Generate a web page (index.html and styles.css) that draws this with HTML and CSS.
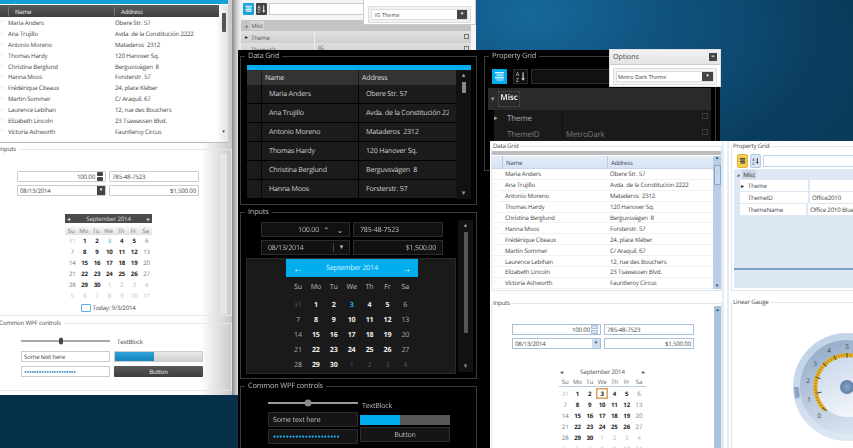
FILE: index.html
```html
<!DOCTYPE html>
<html lang="en">
<head>
<meta charset="utf-8">
<title>WPF themes</title>
<link rel="stylesheet" href="styles.css">
</head>
<body>
<svg class="defs" width="0" height="0" aria-hidden="true">
  <symbol id="cat" viewBox="0 0 15 15"><path d="M3 3h9v1.6H3zM4.5 5.6h7v1.2h-7zM3 7.8h9v1.6H3zM4.5 10.4h7v1.2h-7z" fill="currentColor"/></symbol>
  <symbol id="az" viewBox="0 0 15 15"><text x="2" y="7" font-size="6.5" font-family="Open Sans" fill="currentColor">A</text><text x="2" y="13.5" font-size="6.5" font-family="Open Sans" fill="currentColor">Z</text><path d="M9.8 2.5h1.4v7h1.6l-2.3 3-2.3-3h1.6z" fill="currentColor"/></symbol>
</svg>
<div class="desk">

<!-- IG theme window -->
<section class="win w1">
  <div class="w1-left">
    <div class="gridbox">
      <div class="w1-bar"></div>
      <div class="gridbody">
        <div class="dg dg-ig">
          <div class="dg-head"><span></span><span class="hc">Name</span><span class="hc">Address</span></div>
          <div class="dg-row"><i>▷</i><span>Maria Anders</span><span>Obere Str. 57</span></div>
          <div class="dg-row"><i>▷</i><span>Ana Trujillo</span><span>Avda. de la Constitución 2222</span></div>
          <div class="dg-row"><i>▷</i><span>Antonio Moreno</span><span>Mataderos  2312</span></div>
          <div class="dg-row"><i>▷</i><span>Thomas Hardy</span><span>120 Hanover Sq.</span></div>
          <div class="dg-row"><i>▷</i><span>Christina Berglund</span><span>Berguvsvägen  8</span></div>
          <div class="dg-row"><i>▷</i><span>Hanna Moos</span><span>Forsterstr. 57</span></div>
          <div class="dg-row"><i>▷</i><span>Frédérique Citeaux</span><span>24, place Kléber</span></div>
          <div class="dg-row"><i>▷</i><span>Martin Sommer</span><span>C/ Araquil, 67</span></div>
          <div class="dg-row"><i>▷</i><span>Laurence Lebihan</span><span>12, rue des Bouchers</span></div>
          <div class="dg-row"><i>▷</i><span>Elizabeth Lincoln</span><span>23 Tsawassen Blvd.</span></div>
          <div class="dg-row"><i>▷</i><span>Victoria Ashworth</span><span>Fauntleroy Circus</span></div>
        </div>
        <div class="sb sb-ig"><b class="sb-thumb"></b><em class="end">▾</em></div>
      </div>
    </div>

    <fieldset class="grp grp-ig grp-ig-inputs">
      <legend>Inputs</legend>
      <div class="split split-ig">
        <div>
          <div class="form form-ig">
            <div class="fld r">100.00<span class="spin"><b></b><b></b></span></div>
            <div class="fld">785-48-7523</div>
            <div class="fld">08/13/2014<span class="drop">▾</span></div>
            <div class="fld r">$1,500.00</div>
          </div>
          <div class="cal cal-ig">
            <div class="cal-head"><span>◂</span><span>September 2014</span><span>▸</span></div>
            <div class="days">
              <span>Su</span><span>Mo</span><span>Tu</span><span>We</span><span>Th</span><span>Fr</span><span>Sa</span>
            </div>
            <div class="dates">
              <span class="o">31</span><b>1</b><b>2</b><b class="today">3</b><b>4</b><b>5</b><span>6</span>
              <span>7</span><b>8</b><b>9</b><b>10</b><b>11</b><b>12</b><span>13</span>
              <span>14</span><b>15</b><b>16</b><b>17</b><b>18</b><b>19</b><span>20</span>
              <span>21</span><b>22</b><b>23</b><b>24</b><b>25</b><b>26</b><span>27</span>
              <span>28</span><b>29</b><b>30</b><span class="o">1</span><span class="o">2</span><span class="o">3</span><span class="o">4</span>
              <span class="o">5</span><span class="o">6</span><span class="o">7</span><span class="o">8</span><span class="o">9</span><span class="o">10</span><span class="o">11</span>
            </div>
            <div class="today-line"><i></i>Today: 9/3/2014</div>
          </div>
        </div>
        <div class="sb-pale"></div>
      </div>
    </fieldset>

    <fieldset class="grp grp-ig grp-ig-common">
      <legend>Common WPF controls</legend>
      <div class="wpf wpf-ig">
        <div class="slider"><b></b></div>
        <div class="tb">TextBlock</div>
        <div class="fld">Some text here</div>
        <div class="prog"><b></b></div>
        <div class="fld pass">●●●●●●●●●●●●●●●●●●●●●</div>
        <div class="btn">Button</div>
      </div>
    </fieldset>
  </div>

  <div class="w1-right">
    <div class="tools tools-ig">
      <span class="ti on"><svg><use href="#cat"/></svg></span>
      <span class="ti"><svg><use href="#az"/></svg></span>
      <span class="search"></span>
    </div>
    <div class="pg-ig">
      <div class="pg-cat"><i>◢</i><span>Misc</span></div>
      <div class="pg-row"><i>▸</i><span>Theme</span><span></span><u></u></div>
      <div class="pg-row"><i></i><span>ThemeID</span><span>IG</span><u></u></div>
    </div>
  </div>

  <aside class="opts opts-ig">
    <div class="opts-sel"><div class="sel">IG Theme<span class="drop">▾</span></div></div>
  </aside>
</section>

<!-- Metro Dark window -->
<section class="win w2">
  <div class="w2-left">
    <fieldset class="grp grp-d grp-d-grid">
      <legend>Data Grid</legend>
      <div class="d-bar"></div>
      <div class="gridbody">
        <div class="dg dg-d">
          <div class="dg-head"><span></span><span class="hc">Name</span><span class="hc">Address</span></div>
          <div class="dg-row"><i></i><span>Maria Anders</span><span>Obere Str. 57</span></div>
          <div class="dg-row"><i></i><span>Ana Trujillo</span><span>Avda. de la Constitución 2222</span></div>
          <div class="dg-row"><i></i><span>Antonio Moreno</span><span>Mataderos  2312</span></div>
          <div class="dg-row"><i></i><span>Thomas Hardy</span><span>120 Hanover Sq.</span></div>
          <div class="dg-row"><i></i><span>Christina Berglund</span><span>Berguvsvägen  8</span></div>
          <div class="dg-row"><i></i><span>Hanna Moos</span><span>Forsterstr. 57</span></div>
        </div>
        <div class="sb sb-d"><em>▴</em><b class="sb-thumb"></b><em class="end">▾</em></div>
      </div>
    </fieldset>

    <fieldset class="grp grp-d grp-d-inputs">
      <legend>Inputs</legend>
      <div class="split split-d">
        <div>
          <div class="form form-d">
            <div class="fld r">100.00<span class="chev">⌃ ⌄</span></div>
            <div class="fld">785-48-7523</div>
            <div class="fld">08/13/2014<span class="drop">▾</span></div>
            <div class="fld r">$1,500.00</div>
          </div>
          <div class="cal cal-d">
            <div class="cal-head"><span>←</span><span>September 2014</span><span>→</span></div>
            <div class="days">
              <span>Su</span><span>Mo</span><span>Tu</span><span>We</span><span>Th</span><span>Fr</span><span>Sa</span>
            </div>
            <div class="dates">
              <span class="o">31</span><b>1</b><b>2</b><b class="today">3</b><b>4</b><b>5</b><span>6</span>
              <span>7</span><b>8</b><b>9</b><b>10</b><b>11</b><b>12</b><span>13</span>
              <span>14</span><b>15</b><b>16</b><b>17</b><b>18</b><b>19</b><span>20</span>
              <span>21</span><b>22</b><b>23</b><b>24</b><b>25</b><b>26</b><span>27</span>
              <span>28</span><b>29</b><b>30</b><span class="o">1</span><span class="o">2</span><span class="o">3</span><span class="o">4</span>
            </div>
          </div>
        </div>
        <div class="sb sb-d2"><em>▴</em><b class="sb-thumb"></b><em class="end">▾</em></div>
      </div>
    </fieldset>

    <fieldset class="grp grp-d grp-d-common">
      <legend>Common WPF controls</legend>
      <div class="wpf wpf-d">
        <div class="slider"><b></b></div>
        <div class="tb">TextBlock</div>
        <div class="fld">Some text here</div>
        <div class="prog"><b></b></div>
        <div class="fld pass">●●●●●●●●●●●●●●●●●●●●●</div>
        <div class="btn">Button</div>
      </div>
    </fieldset>
  </div>

  <div class="w2-right">
    <fieldset class="grp grp-d grp-d-pg">
      <legend>Property Grid</legend>
      <div class="tools tools-d">
        <span class="ti on"><svg><use href="#cat"/></svg></span>
        <span class="ti"><svg><use href="#az"/></svg></span>
        <span class="search"></span>
      </div>
      <div class="pg-d">
        <div class="pg-cat"><i>▾</i><span>Misc</span></div>
        <div class="pg-row"><i>▸</i><span>Theme</span><span></span><u></u></div>
        <div class="pg-row"><i></i><span>ThemeID</span><span>MetroDark</span><u></u></div>
      </div>
    </fieldset>
  </div>

  <aside class="opts opts-d">
    <div class="opts-title"><span>Options</span><b>–</b></div>
    <div class="opts-sel"><div class="sel">Metro Dark Theme<span class="drop">▾</span></div></div>
  </aside>
</section>

<!-- Office 2010 window -->
<section class="win w3">
  <div class="w3-left">
    <fieldset class="grp grp-o grp-o-grid">
      <legend>Data Grid</legend>
      <div class="o-bar"></div>
      <div class="gridbody">
        <div class="dg dg-o">
          <div class="dg-head"><span></span><span class="hc">Name</span><span class="hc">Address</span></div>
          <div class="dg-row"><i>▷</i><span>Maria Anders</span><span>Obere Str. 57</span></div>
          <div class="dg-row"><i>▷</i><span>Ana Trujillo</span><span>Avda. de la Constitución 2222</span></div>
          <div class="dg-row"><i>▷</i><span>Antonio Moreno</span><span>Mataderos  2312</span></div>
          <div class="dg-row"><i>▷</i><span>Thomas Hardy</span><span>120 Hanover Sq.</span></div>
          <div class="dg-row"><i>▷</i><span>Christina Berglund</span><span>Berguvsvägen  8</span></div>
          <div class="dg-row"><i>▷</i><span>Hanna Moos</span><span>Forsterstr. 57</span></div>
          <div class="dg-row"><i>▷</i><span>Frédérique Citeaux</span><span>24, place Kléber</span></div>
          <div class="dg-row"><i>▷</i><span>Martin Sommer</span><span>C/ Araquil, 67</span></div>
          <div class="dg-row"><i>▷</i><span>Laurence Lebihan</span><span>12, rue des Bouchers</span></div>
          <div class="dg-row"><i>▷</i><span>Elizabeth Lincoln</span><span>23 Tsawassen Blvd.</span></div>
          <div class="dg-row"><i>▷</i><span>Victoria Ashworth</span><span>Fauntleroy Circus</span></div>
        </div>
        <div class="sb sb-o"><em>▴</em><b class="sb-thumb"></b><em class="end">▾</em></div>
      </div>
    </fieldset>

    <fieldset class="grp grp-o grp-o-inputs">
      <legend>Inputs</legend>
      <div class="split split-o">
        <div>
          <div class="form form-o">
            <div class="fld r">100.00<span class="spin"><b></b><b></b></span></div>
            <div class="fld">785-48-7523</div>
            <div class="fld">08/13/2014<span class="drop">▾</span></div>
            <div class="fld r">$1,500.00</div>
          </div>
          <div class="cal cal-o">
            <div class="cal-head"><span>◂</span><span>September 2014</span><span>▸</span></div>
            <div class="days">
              <span>Su</span><span>Mo</span><span>Tu</span><span>We</span><span>Th</span><span>Fr</span><span>Sa</span>
            </div>
            <div class="dates">
              <span class="o">31</span><b>1</b><b>2</b><b class="today">3</b><b>4</b><b>5</b><span>6</span>
              <span>7</span><b>8</b><b>9</b><b>10</b><b>11</b><b>12</b><span>13</span>
              <span>14</span><b>15</b><b>16</b><b>17</b><b>18</b><b>19</b><span>20</span>
              <span>21</span><b>22</b><b>23</b><b>24</b><b>25</b><b>26</b><span>27</span>
              <span>28</span><b>29</b><b>30</b><span class="o">1</span><span class="o">2</span><span class="o">3</span><span class="o">4</span>
              <span class="o">5</span><span class="o">6</span><span class="o">7</span><span class="o">8</span><span class="o">9</span><span class="o">10</span><span class="o">11</span>
            </div>
          </div>
        </div>
        <div class="sb sb-o2"><em>▴</em></div>
      </div>
    </fieldset>
  </div>

  <div class="w3-right">
    <fieldset class="grp grp-o grp-o-pg">
      <legend>Property Grid</legend>
      <div class="tools tools-o">
        <span class="ti on"><svg><use href="#cat"/></svg></span>
        <span class="ti"><svg><use href="#az"/></svg></span>
        <span class="search"></span>
      </div>
      <div class="pg-o">
        <div class="pg-cat"><i>◢</i><span>Misc</span></div>
        <div class="pg-row"><i>▸</i><span>Theme</span><span></span></div>
        <div class="pg-row"><i></i><span>ThemeID</span><span>Office2010</span></div>
        <div class="pg-row"><i></i><span>ThemeName</span><span>Office 2010 Blue</span></div>
      </div>
      <div class="pg-desc"></div>
    </fieldset>

    <fieldset class="grp grp-o grp-o-gauge">
      <legend>Linear Gauge</legend>
      <svg class="gauge" viewBox="0 0 61 115" width="61" height="115" role="img" aria-label="Gauge">
        <defs>
          <linearGradient id="g-outer" x1="0.2" y1="0" x2="0.7" y2="1"><stop offset="0" stop-color="#bfd1e6"/><stop offset="1" stop-color="#e2ebf5"/></linearGradient>
          <linearGradient id="g-ring" x1="0" y1="0" x2="0.4" y2="1"><stop offset="0" stop-color="#8ea6c4"/><stop offset="1" stop-color="#d7e2ef"/></linearGradient>
          <linearGradient id="g-dial" x1="0.1" y1="0" x2="0.6" y2="1"><stop offset="0" stop-color="#c8d6e9"/><stop offset="1" stop-color="#f4f7fb"/></linearGradient>
          <radialGradient id="g-hub"><stop offset="0" stop-color="#88a5c8"/><stop offset="1" stop-color="#5d7fa8"/></radialGradient>
        </defs>
        <circle cx="55" cy="57" r="54" fill="url(#g-outer)"/>
        <circle cx="55" cy="57" r="47" fill="url(#g-ring)"/>
        <path d="M2 57a53 53 0 0 0 1.5 12L8 67a47 47 0 0 1 -1-10z" fill="#8ea6c6"/>
        <circle cx="55" cy="57" r="30" fill="url(#g-dial)"/>
        <path d="M33 80A32 32 0 0 1 61 25.6" fill="none" stroke="#e8b01f" stroke-width="4"/>
        <path d="M33 80A32 32 0 0 1 61 25.6" fill="none" stroke="#6e5a20" stroke-width="2.4" stroke-dasharray="0.5 2.4"/>
        <path d="M31 78l4 3M24.500 63l5-.8M23.500 47l5 1.800M31 33l4 3.500M42 25.500l2 4.500M55 23v5" stroke="#4a4a3a" stroke-width="1"/>
        <circle cx="55" cy="57" r="7" fill="url(#g-hub)"/>
        <g class="gauge-num">
          <text x="27" y="88">0</text><text x="17" y="72">1</text><text x="16" y="53">2</text><text x="23" y="36">3</text><text x="37" y="23">4</text><text x="55" y="19">5</text>
        </g>
      </svg>
    </fieldset>
  </div>
</section>
</div>
</body>
</html>
```

FILE: styles.css
```css
* { box-sizing: border-box; }
html, body { margin: 0; padding: 0; width: 853px; height: 448px; overflow: hidden; background: #0a3550; }
.defs { position: absolute; }
.desk {
  position: relative; width: 853px; height: 448px; overflow: hidden;
  font-family: "Open Sans", "Liberation Sans", sans-serif;
  text-rendering: geometricPrecision;
  background:
    radial-gradient(ellipse 300px 170px at 530px 15px, #16699b 0%, #10527e 45%, rgba(11,63,98,0) 100%),
    radial-gradient(ellipse 500px 300px at 650px 60px, #0b4468 0%, #07304b 100%);
  filter: blur(.4px);
  transform: translateZ(0);
}
.win { position: absolute; }
i { font-style: normal; }

/* ---------- shared ---------- */
.grp { margin: 0; padding: 0; min-width: 0; display: block; }
.grp legend { padding: 0 3px; line-height: 10px; height: 10px; }
.gridbody { display: flex; }
.dg { flex: 1; min-width: 0; }
.dg-head, .dg-row { display: grid; grid-template-columns: var(--c0) var(--c1) var(--c2); align-items: center; white-space: pre; }
.dg-row > span { overflow: hidden; }
.sb { display: flex; flex-direction: column; align-items: center; }
.sb em { font-style: normal; line-height: 1; }
.sb .end { margin-top: auto; }
.sb-thumb { display: block; }
.split { display: grid; }
.form { display: grid; }
.fld { position: relative; display: flex; align-items: center; white-space: nowrap; overflow: hidden; }
.fld.r { justify-content: flex-end; }
.days, .dates { display: grid; grid-template-columns: repeat(7, var(--cw)); text-align: center; }
.cal-head { display: flex; align-items: center; justify-content: space-between; }
.wpf { display: grid; align-items: center; }
.slider { position: relative; height: 2px; }
.slider b { position: absolute; top: 50%; transform: translate(-50%, -50%); }
.prog b { display: block; height: 100%; }
.btn { display: flex; align-items: center; justify-content: center; }
.tools { display: flex; align-items: center; }
.ti { display: block; }
.ti svg { display: block; width: 100%; height: 100%; }
.search { display: block; flex: 1; }
.pg-cat, .pg-row { display: flex; align-items: center; }
.opts { position: absolute; letter-spacing: 0; }
.sel { position: relative; display: flex; align-items: center; }

/* ---------- IG window ---------- */
.w1 { left: -10px; top: 0; width: 486px; height: 395px; display: grid; grid-template-columns: 242px 244px; background: #f4f4f4; }
.w1-left { background: linear-gradient(to right, #fff 0, #fff 210px, #c9c9c9 242px); font-size: 6.1px; letter-spacing: -.17px; color: #444; }
.gridbox { height: 143px; width: 238px; background: linear-gradient(to right, #fff 0, #fff 226px, #e2e2e2 238px); border-bottom: 1px solid #bbb; }
.w1-bar { height: 5px; background: #149fd6; border-bottom: 1px solid #fff; }
.dg-ig { --c0: 18px; --c1: 106px; --c2: 105px; }
.dg-ig .dg-head { height: 12px; background: linear-gradient(#5b5b5b, #3f3f3f); color: #f2f2f2; }
.dg-ig .hc { padding-left: 6px; border-left: 1px solid #777; }
.dg-ig .dg-row { height: 10.900px; }
.dg-ig .dg-row i { padding-left: 11px; color: #ddd; font-size: 5px; }
.dg-ig .dg-row span + span { padding-left: 1px; }
.sb-ig { width: 9px; height: 133px; padding: 8px 0 3px; color: #444; font-size: 5px; }
.sb-ig .sb-thumb { width: 4px; height: 19px; background: #555; border-radius: 1px; }

.grp-ig { border: 1px solid #e6e6e6; border-left: 0; }
.grp-ig legend { margin-left: 6px; }
.grp-ig-inputs { margin-top: 1px; height: 172px; }
.grp-ig-common { margin-top: 2px; height: 73px; }
.split-ig { grid-template-columns: 230px 7px; }
.sb-pale { background: #e6e6e6; height: 160px; }
.form-ig { grid-template-columns: 89px 90px; gap: 3px; margin: 17px 0 0 27px; grid-auto-rows: 11px; }
.form-ig .fld { background: #fff; border: 1px solid #ccc; border-radius: 1px; padding: 0 2px; }
.form-ig .spin { width: 6px; height: 9px; margin-left: 2px; display: flex; flex-direction: column; gap: 1px; }
.form-ig .spin b { flex: 1; background: #444; border-radius: 1px; }
.form-ig .drop { position: absolute; right: 0; top: 0; bottom: 0; width: 8px; background: #444; color: #fff; text-align: center; font-size: 5px; line-height: 9px; }
.cal-ig { --cw: 12.4px; margin: 18px 0 0 75px; width: 87px; }
.cal-ig .cal-head { height: 9px; background: #4b4b4b; color: #ddd; padding: 0 2px; margin-bottom: 3px; }
.cal-ig .days { background: linear-gradient(#fafafa, #e0e0e0); height: 9px; line-height: 9px; color: #777; }
.cal-ig .dates { grid-auto-rows: 11px; line-height: 11px; color: #777; margin-left: 1px; }
.cal-ig .dates b { color: #222; font-weight: 700; }
.cal-ig .dates .o { color: #bbb; }
.cal-ig .dates .today { color: #1c9cd8; font-weight: 400; }
.cal-ig .today-line { display: flex; align-items: center; justify-content: center; gap: 1px; height: 11px; margin-top: 1px; color: #444; }
.cal-ig .today-line i { width: 10px; height: 8px; border: 1px solid #5aaede; border-radius: 1px; }

.wpf-ig { grid-template-columns: 89px 89px; column-gap: 4px; grid-template-rows: 13px 11px 11px; row-gap: 4px; margin: 6px 0 0 31px; }
.wpf-ig .slider { background: #aaa; }
.wpf-ig .slider b { left: 45%; width: 4px; height: 7px; background: #444; border-radius: 2px; }
.wpf-ig .tb { margin-left: 3px; color: #444; padding-top: 2px; }
.wpf-ig .fld { height: 11px; background: #fff; border: 1px solid #ccc; padding: 0 2px; }
.wpf-ig .pass { color: #1280b8; font-size: 4px; letter-spacing: .05px; }
.wpf-ig .prog { height: 11px; background: linear-gradient(#e8e8e8, #d0d0d0); border: 1px solid #ccc; }
.wpf-ig .prog b { width: 45%; background: linear-gradient(#2fa3d8, #1583bc); }
.wpf-ig .btn { height: 11px; background: linear-gradient(#5a5a5a, #3e3e3e); color: #eee; border-radius: 1px; }

.w1-right { padding: 2px 0 0 11px; font-size: 6.1px; letter-spacing: -.17px; color: #555; background: linear-gradient(to right, #8a8a8a 0, #dcdcdc 6px, #f5f5f5 10px); }
.tools-ig { height: 13px; gap: 2px; width: 217px; }
.tools-ig .ti { width: 11px; height: 12px; border-radius: 1px; background: #444; color: #eee; }
.tools-ig .ti.on { background: #1ca3dc; color: #fff; }
.tools-ig .search { height: 12px; background: #fff; border: 1px solid #ccc; }
.pg-ig { width: 230px; margin-top: 5px; margin-left: -2px; }
.pg-ig .pg-cat { height: 11px; background: #c4c4c4; padding-left: 4px; gap: 3px; }
.pg-ig .pg-cat i { font-size: 3px; }
.pg-ig .pg-cat span { background: #d4d4d4; padding: 0 1px; }
.pg-ig .pg-row { height: 12px; background: linear-gradient(#e0e0e0, #cfcfcf); position: relative; }
.pg-ig .pg-row i { width: 10px; padding-left: 4px; color: #222; font-size: 6px; }
.pg-ig .pg-row span:nth-of-type(1) { width: 63px; }
.pg-ig .pg-row span:nth-of-type(2) { padding-left: 3px; border-left: 1px solid #eee; height: 100%; }
.pg-ig .pg-row u { position: absolute; right: 2px; top: 3px; width: 5px; height: 5px; border: 1px solid #777; }

.opts-ig { left: 373px; top: -10px; width: 113px; height: 35px; background: #fff; border: 1px solid #ccc; padding: 15px 4px 0; }
.opts-ig .opts-sel { border: 1px solid #ddd; padding: 2px; background: #f2f2f2; }
.opts-ig .sel { height: 11px; background: #fff; padding-left: 3px; font-size: 5.500px; color: #444; border: 1px solid #ddd; }
.opts-ig .drop { position: absolute; right: 0; top: 0; bottom: 0; width: 10px; background: #444; color: #fff; text-align: center; line-height: 9px; font-size: 5px; }

/* ---------- Metro Dark window ---------- */
.w2 { left: 238px; top: 50px; width: 482px; height: 398px; background: #000; display: grid; grid-template-columns: 242px 240px; color: #cfcfcf; font-size: 7.100px; letter-spacing: -.2px; }
.w2-left { padding: 1px 0 0 2px; }
.grp-d { border: 1px solid #3c3c3c; width: 237px; color: #bbb; }
.grp-d legend { margin-left: 4px; font-size: 7.400px; }
.grp-d-grid { height: 154px; }
.d-bar { height: 5px; margin: 4px 5px 0 6px; background: #00aeef; }
.grp-d-grid .gridbody { margin: 0 5px 0 6px; }
.dg-d { --c0: 14px; --c1: 97px; --c2: 91px; }
.dg-d .dg-head, .dg-d .dg-row { background: #1b1b1b; }
.dg-d .dg-head { height: 15px; background: #333; color: #ddd; }
.dg-d .hc { padding-left: 3px; border-left: 1px solid #1a1a1a; height: 100%; display: flex; align-items: center; }
.dg-d .dg-row { height: 19px; border-bottom: 1px solid #000; color: #cfcfcf; }
.dg-d .dg-row > * { height: 100%; display: flex; align-items: center; }
.dg-d .dg-row > span { padding-left: 7px; border-left: 1px solid #050505; }
.sb-d { width: 15px; background: #111; color: #999; font-size: 7px; padding: 2px 0; }
.sb-d .sb-thumb { width: 4px; height: 11px; background: #888; margin-top: 3px; }
.grp-d-inputs { margin-top: 2px; height: 172px; }
.split-d { grid-template-columns: 210px 15px; column-gap: 2px; padding: 5px 0 0 5px; }
.form-d { grid-template-columns: 89px 90px; gap: 3px; margin-left: 15px; grid-auto-rows: 15px; }
.form-d .fld { background: #111; border: 1px solid #2c2c2c; padding: 0 6px; }
.form-d .fld.r:first-child { padding-right: 30px; }
.form-d .chev { position: absolute; right: 6px; top: 2px; font-size: 8px; word-spacing: 5px; color: #bbb; }
.form-d .drop { position: absolute; right: 0; top: 2px; bottom: 2px; width: 16px; border-left: 1px solid #444; text-align: center; font-size: 7px; line-height: 10px; color: #bbb; }
.cal-d { --cw: 17.900px; background: #1a1a1a; border: 1px solid #282828; height: 116px; overflow: hidden; margin-top: 3px; }
.cal-d .cal-head { width: 132px; height: 18px; margin-left: 39px; background: #00aeef; color: #d8f4ff; padding: 0 7px; }
.cal-d .cal-head span:first-child, .cal-d .cal-head span:last-child { font-size: 10px; color: #fff; font-weight: 700; }
.cal-d .days { margin: 3px 0 3px 42px; line-height: 15px; }
.cal-d .dates { margin-left: 42px; grid-auto-rows: 15px; line-height: 15px; color: #aaa; }
.cal-d .dates b { color: #eee; }
.cal-d .dates .o { color: #555; }
.cal-d .dates .today { color: #1caee8; }
.sb-d2 { width: 15px; height: 152px; background: #111; color: #888; font-size: 7px; padding: 2px 0; margin-top: -2px; }
.sb-d2 .sb-thumb { width: 4px; height: 101px; background: #555; margin-top: 3px; }
.grp-d-common { margin-top: 2px; height: 100px; }
.wpf-d { grid-template-columns: 90px 90px; column-gap: 2px; grid-template-rows: 15px 15px 15px; row-gap: 2px; margin: 4px 0 0 27px; }
.wpf-d .slider { background: #999; }
.wpf-d .slider b { left: 44%; width: 7px; height: 7px; background: #888; border-radius: 50%; }
.wpf-d .tb { margin: 6px 0 0 2px; }
.wpf-d .fld { height: 15px; background: #151515; border: 1px solid #2c2c2c; padding: 0 4px; }
.wpf-d .pass { color: #10b4f0; font-size: 5.100px; letter-spacing: .1px; }
.wpf-d .prog { height: 10px; background: #585858; }
.wpf-d .prog b { width: 44%; background: #00aeef; }
.wpf-d .btn { height: 15px; background: #151515; border: 1px solid #2c2c2c; margin-top: -4px; }

.w2-right { padding: 1px 0 0 4px; }
.grp-d-pg { width: 232px; height: 120px; }
.tools-d { height: 15px; margin: 8px 0 0 7px; gap: 6px; }
.tools-d .ti { width: 15px; height: 15px; background: #111; border: 1px solid #2c2c2c; color: #ccc; }
.tools-d .ti.on { background: #00aeef; color: #cdf0ff; border: 0; }
.tools-d .ti + .ti { margin-right: -3px; }
.tools-d .search { height: 15px; background: #111; border: 1px solid #2c2c2c; margin-right: 6px; }
.pg-d { margin: 4px 4px 0 3px; font-size: 8px; }
.pg-d .pg-cat { height: 22px; background: #2a2a2a; padding-left: 3px; gap: 4px; }
.pg-d .pg-cat i { font-size: 7px; color: #999; }
.pg-d .pg-cat span { font-weight: 700; color: #ddd; border: 1px dotted #555; padding: 1px 1px; height: 16px; line-height: 9px; }
.pg-d .pg-row { height: 16px; background: #1a1a1a; position: relative; margin-left: 6px; color: #777; }
.pg-d .pg-row i { width: 13px; color: #aaa; font-size: 7px; }
.pg-d .pg-row span:nth-of-type(1) { width: 55px; color: #aaa; }
.pg-d .pg-row + .pg-row span:nth-of-type(1) { color: #7d7d7d; }
.pg-d .pg-row span:nth-of-type(2) { padding-left: 3px; border-left: 1px solid #111; height: 100%; display: flex; align-items: center; }
.pg-d .pg-row u { position: absolute; right: 3px; top: 3px; width: 6px; height: 6px; border: 1px solid #3a3a3a; }

.opts-d { left: 371px; top: -1px; width: 112px; height: 38px; background: #fff; border: 1px solid #ddd; }
.opts-d .opts-title { height: 15px; background: linear-gradient(#f2f2f2, #e4e4e4); display: flex; align-items: center; justify-content: space-between; padding: 0 3px 0 3px; font-size: 7px; color: #444; border-bottom: 1px solid #ccc; }
.opts-d .opts-title b { width: 8px; height: 8px; background: #444; color: #fff; font-size: 7px; line-height: 8px; text-align: center; }
.opts-d .opts-sel { margin: 3px; border: 1px solid #ddd; padding: 2px; background: #f4f4f4; }
.opts-d .sel { height: 11px; background: #fff; padding-left: 1px; font-size: 5.500px; color: #444; border: 1px solid #ddd; }
.opts-d .drop { position: absolute; right: 0; top: 0; bottom: 0; width: 11px; background: #444; color: #fff; text-align: center; font-size: 5px; line-height: 9px; }

/* ---------- Office window ---------- */
.w3 { left: 490px; top: 141px; width: 363px; height: 307px; background: #fff; display: grid; grid-template-columns: 234px 129px; font-size: 6.100px; letter-spacing: -.17px; color: #444; }
.w3-left { padding-left: 1px; border-right: 2px solid #e4ecf5; }
.grp-o { border: 1px solid #dfe7f1; }
.grp-o legend { margin-left: 0; padding: 0 1px; }
.grp-o-grid { height: 150px; width: 231px; }
.o-bar { height: 5px; background: #bdbdbd; border-bottom: 1px solid #fff; }
.dg-o { --c0: 10px; --c1: 105px; --c2: 106px; }
.dg-o .dg-head { height: 13px; background: linear-gradient(#e6eef7, #d5e2f1); color: #445; border-bottom: 1px solid #c6d5e8; }
.dg-o .hc { padding-left: 3px; border-left: 1px solid #b9cce2; height: 100%; display: flex; align-items: center; }
.dg-o .dg-row { height: 10.900px; border-bottom: 1px solid #eef1f5; }
.dg-o .dg-row i { color: #ddd; font-size: 5px; padding-left: 2px; }
.dg-o .dg-row span { padding-left: 3px; }
.sb-o { width: 8px; background: #b9cde6; color: #24466e; font-size: 5px; }
.sb-o .sb-thumb { width: 7px; height: 20px; background: #c6d8ee; border: 1px solid #8aa7cc; margin-top: 4px; }
.grp-o-inputs { margin-top: 7px; height: 170px; width: 231px; }
.split-o { grid-template-columns: 222px 7px; padding-left: 0; }
.form-o { grid-template-columns: 89px 90px; gap: 3px; margin: 16px 0 0 20px; grid-auto-rows: 11px; }
.form-o .fld { background: #fff; border: 1px solid #a9c0dc; padding: 0 2px; }
.form-o .spin { width: 7px; height: 9px; margin-left: 1px; display: flex; flex-direction: column; gap: 1px; }
.form-o .spin b { flex: 1; background: #d7e3f1; border: 1px solid #a9c0dc; }
.form-o .drop { position: absolute; right: 0; top: 0; bottom: 0; width: 8px; background: #cfdeef; color: #244; text-align: center; font-size: 5px; line-height: 9px; }
.cal-o { --cw: 12.300px; width: 87px; margin: 17px 0 0 67px; }
.cal-o .cal-head { height: 11px; padding: 0 1px; color: #555; }
.cal-o .days { height: 10px; line-height: 9px; border-bottom: 1px solid #b7cbe3; color: #666; }
.cal-o .dates { grid-auto-rows: 11px; line-height: 11px; color: #777; margin-top: 1px; }
.cal-o .dates b { color: #222; }
.cal-o .dates .o { color: #bbb; }
.cal-o .dates .today { box-shadow: inset 0 0 0 1.500px #dca35f; }
.sb-o2 { width: 7px; height: 150px; margin-top: -2px; background: #a9c2e0; color: #24466e; font-size: 5px; padding-top: 2px; }

.w3-right { padding-left: 2px; border-left: 2px solid #e4ecf5; margin-left: 3px; }
.grp-o-pg { height: 150px; margin-right: -2px; }
.tools-o { height: 15px; margin: 2px 0 0 5px; gap: 2px; }
.tools-o .ti { width: 11px; height: 14px; background: #d9e5f3; border: 1px solid #b5c9e2; border-radius: 2px; color: #223; }
.tools-o .ti.on { background: #f5cd52; border-color: #e3b43b; }
.tools-o .search { height: 12px; background: #fff; border: 1px solid #c0d2e7; }
.pg-o { height: 99px; background: #dde8f4; margin: 1px 0 0 2px; }
.pg-o .pg-cat { height: 11px; padding-left: 3px; gap: 3px; }
.pg-o .pg-cat i { font-size: 3px; color: #222; }
.pg-o .pg-cat span { background: #cdd7e3; padding: 0 1px; color: #333; }
.pg-o .pg-row { height: 11px; margin: 0 0 1px 6px; background: #fff; }
.pg-o .pg-row i { width: 8px; padding-left: 1px; font-size: 6px; color: #111; }
.pg-o .pg-row span:nth-of-type(1) { width: 60px; }
.pg-o .pg-row span:nth-of-type(2) { padding-left: 2px; border-left: 2px solid #dde8f4; height: 100%; white-space: nowrap; display: flex; align-items: center; }
.pg-desc { height: 20px; margin-left: 2px; background: #dde8f4; border-top: 2px solid #7f9fc4; }
.grp-o-gauge { margin-top: 6px; height: 170px; margin-right: -2px; }
.gauge { display: block; margin: 23px 0 0 60px; }
.gauge-num text { font-family: "Open Sans", sans-serif; font-size: 6.500px; fill: #444; text-anchor: middle; }
```
